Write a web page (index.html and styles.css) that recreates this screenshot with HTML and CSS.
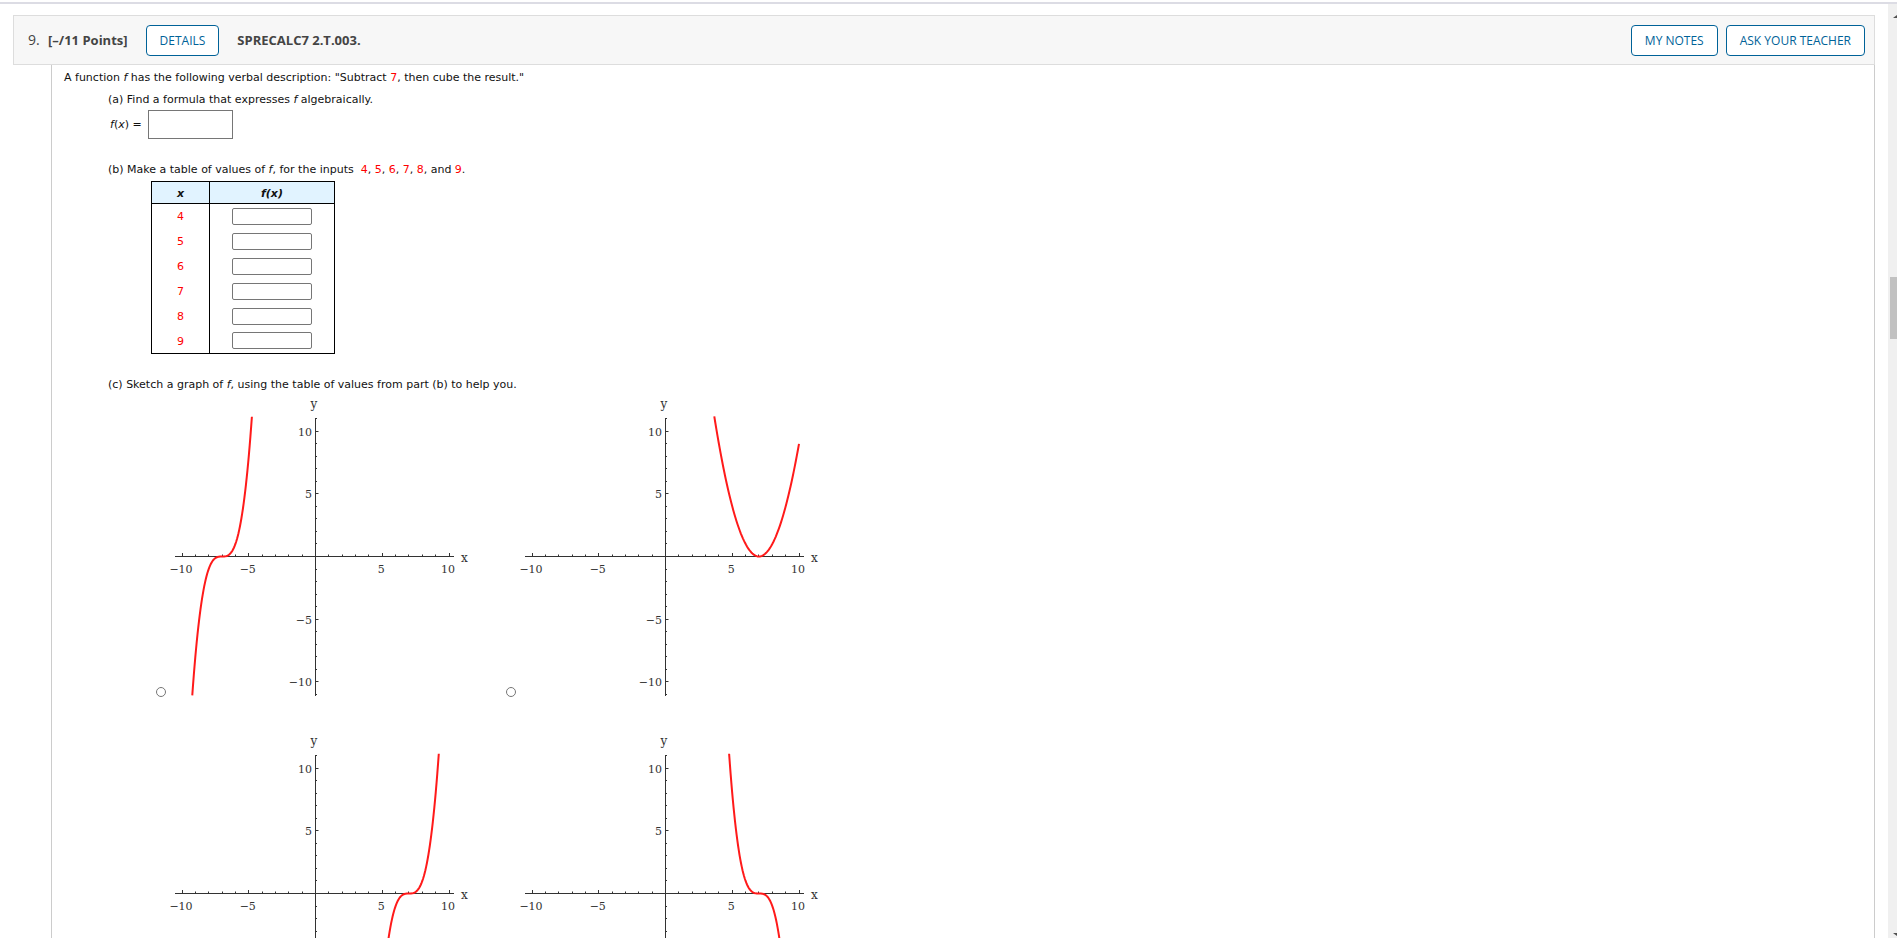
FILE: index.html
```html
<!DOCTYPE html>
<html lang="en">
<head>
  <meta charset="UTF-8">
  <meta name="viewport" content="width=device-width, initial-scale=1.0">
  <title>SPRECALC7 2.T.003.</title>
  <link rel="stylesheet" href="styles.css">
</head>
<body>

  <div class="window">
    <main class="page">
      <section class="question">
        <header class="question-header">
          <span class="number">9.</span>
          <strong class="points">[–/11 Points]</strong>
          <button class="btn" type="button">DETAILS</button>
          <strong class="code">SPRECALC7 2.T.003.</strong>
          <div class="actions">
            <button class="btn" type="button">MY NOTES</button>
            <button class="btn" type="button">ASK YOUR TEACHER</button>
          </div>
        </header>

        <div class="question-body">
          <p>A function <i>f</i> has the following verbal description: "Subtract <span class="red">7</span>, then cube the result."</p>

          <div class="part">
            <p>(a) Find a formula that expresses <i>f</i> algebraically.</p>
            <div class="formula">
              <label for="formula"><i>f</i>(<i>x</i>) =</label>
              <input type="text" id="formula">
            </div>
          </div>

          <div class="part">
            <p>(b) Make a table of values of <i>f</i>, for the inputs &nbsp;<span class="red">4</span>, <span class="red">5</span>, <span class="red">6</span>, <span class="red">7</span>, <span class="red">8</span>, and <span class="red">9</span>.</p>
            <table class="values">
              <thead>
                <tr><th class="col-x">x</th><th class="col-f">f(x)</th></tr>
              </thead>
              <tbody>
                <tr><td class="red">4</td><td><input type="text" aria-label="f(4)"></td></tr>
                <tr><td class="red">5</td><td><input type="text" aria-label="f(5)"></td></tr>
                <tr><td class="red">6</td><td><input type="text" aria-label="f(6)"></td></tr>
                <tr><td class="red">7</td><td><input type="text" aria-label="f(7)"></td></tr>
                <tr><td class="red">8</td><td><input type="text" aria-label="f(8)"></td></tr>
                <tr><td class="red">9</td><td><input type="text" aria-label="f(9)"></td></tr>
              </tbody>
            </table>
          </div>

          <div class="part">
            <p>(c) Sketch a graph of <i>f</i>, using the table of values from part (b) to help you.</p>
            <div class="graphs" id="graphs"></div>
          </div>
        </div>
      </section>
    </main>

    <div class="scrollbar">
      <span class="arrow up"></span>
      <span class="thumb"></span>
      <span class="arrow down"></span>
    </div>
  </div>

  <script>
    // origin and scale of every graph, in svg units
    const OX = 145.5, OY = 161.5, SX = 13.35, SY = 12.52;

    const choices = [
      { fn: x => Math.pow(x + 7, 3), from: -9.23, to: -4.765 },
      { fn: x => Math.pow(x - 7, 2), from: 3.655, to: 10 },
      { fn: x => Math.pow(x - 7, 3), from: 4.77, to: 9.235 },
      { fn: x => -Math.pow(x - 7, 3), from: 4.765, to: 9.23 }
    ];

    function label(x, y, anchor, text, cls) {
      return `<text class="${cls}" x="${x}" y="${y}" text-anchor="${anchor}">${text}</text>`;
    }

    function axes() {
      let d = `M5 ${OY}H284M${OX} 23V301`;
      let out = '';
      for (let i = -11; i <= 11; i++) {
        if (i === 0) continue;
        const major = i % 5 === 0;
        const y = Math.round(OY - i * SY - 0.5) + 0.5;
        d += `M${OX} ${y}h${major ? 3 : 1.5}`;
        if (Math.abs(i) <= 10) {
          const x = Math.round(OX + i * SX - 0.5) + 0.5;
          d += `M${x} ${OY}v${major ? -3.5 : -2}`;
        }
        if (major) {
          const text = String(i).replace('-', '−');
          out += label(OX + i * SX - 1, OY + 16, 'middle', text, 'tick');
          out += label(142, y + 4, 'end', text, 'tick');
        }
      }
      out += label(291, OY + 5, 'start', 'x', 'axis-name');
      out += label(144, 13, 'middle', 'y', 'axis-name');
      return `<path class="axis" d="${d}"/>` + out;
    }

    function curve(c) {
      const points = [];
      for (let i = 0; i <= 80; i++) {
        const x = c.from + (c.to - c.from) * i / 80;
        points.push((OX + x * SX).toFixed(2) + ',' + (OY - c.fn(x) * SY).toFixed(2));
      }
      return `<polyline class="curve" points="${points.join(' ')}"/>`;
    }

    document.getElementById('graphs').innerHTML = choices.map((c, i) => `
      <label class="choice">
        <input type="radio" name="graph" value="${i}" aria-label="Graph ${i + 1}">
        <svg width="304" height="304" viewBox="0 0 304 304">${axes()}${curve(c)}</svg>
      </label>`).join('');
  </script>

</body>
</html>
```
FILE: styles.css
```css
* {
  box-sizing: border-box;
}

body {
  margin: 0;
  overflow: hidden;
  font-family: Verdana, "DejaVu Sans", sans-serif;
  font-size: 11px;
  line-height: 20px;
  color: #111;
  background: #fff;
}

p {
  margin: 0;
  padding-top: 2px;
}

.red {
  color: #f00;
}

.window {
  display: flex;
  height: 100vh;
  padding-top: 4px;
  background: linear-gradient(#fff 2px, #dcdce4 2px, #dcdce4 4px, #fff 4px);
}

.page {
  flex: 1;
  padding: 11px 13px 0;
  overflow: hidden;
}

/* header */

.question-header {
  display: flex;
  align-items: center;
  height: 50px;
  padding: 0 9px 0 14px;
  border: 1px solid #ddd;
  background: #f7f7f7;
  font-family: "Open Sans", sans-serif;
  font-size: 13px;
  color: #444;
}

.number {
  width: 20px;
  font-size: 14px;
}

.points {
  margin-right: 18px;
}

.code {
  margin-left: 18px;
}

.actions {
  display: flex;
  gap: 8px;
  margin-left: auto;
}

.btn {
  height: 31px;
  padding: 0 13px;
  border: 1px solid #006298;
  border-radius: 4px;
  background: #fff;
  font-family: "Open Sans", sans-serif;
  font-size: 12px;
  font-weight: 500;
  color: #006298;
  cursor: pointer;
}

/* question text */

.question-body {
  margin-left: 38px;
  padding: 1px 12px 0;
  border: solid #ccc;
  border-width: 0 1px;
}

.part {
  margin-left: 44px;
}

.formula {
  display: flex;
  align-items: center;
  gap: 6px;
  margin-bottom: 19px;
  padding-left: 2px;
}

.formula input {
  width: 85px;
  height: 29px;
  border: 1px solid #767676;
}

/* table of values */

.values {
  margin: 1px 0 19px 43px;
  border-collapse: collapse;
  border: 1px solid #000;
  line-height: 16px;
  text-align: center;
}

.values th {
  height: 22px;
  padding: 2px 0 0;
  border: 1px solid #000;
  background: #e1f3ff;
  font-style: italic;
}

.values td {
  height: 25px;
  padding: 0;
  border-right: 1px solid #000;
}

.values td.red {
  padding-top: 2px;
}

.col-x {
  width: 58px;
}

.col-f {
  width: 125px;
}

.values input {
  display: block;
  width: 80px;
  height: 17px;
  margin: 0 auto;
  border: 1px solid #767676;
  border-radius: 2px;
}

/* graph choices */

.graphs {
  display: grid;
  grid-template-columns: 350px 350px;
  grid-auto-rows: 337px;
  margin-left: 48px;
}

.choice {
  display: flex;
  align-items: flex-end;
  gap: 4px;
  height: 304px;
}

.choice input {
  width: 10px;
  height: 10px;
  margin: 0 0 2px;
}

.axis {
  fill: none;
  stroke: #333;
}

.curve {
  fill: none;
  stroke: #ff1a1a;
  stroke-width: 2;
}

.tick,
.axis-name {
  font-family: "DejaVu Serif", serif;
  font-size: 11px;
  fill: #333;
}

.axis-name {
  font-size: 12px;
}

/* scrollbar at the window's edge */

.scrollbar {
  display: flex;
  flex-direction: column;
  width: 9px;
  padding: 11px 0 2px 2px;
  overflow: hidden;
  background: #f0f0f0;
}

.thumb {
  height: 62px;
  margin-top: 259px;
  background: #c1c1c1;
}

.arrow {
  width: 8px;
  margin-left: 3px;
  border: 4px solid transparent;
}

.arrow.up {
  height: 3px;
  border-top: 0;
  border-bottom: 3px solid #505050;
}

.arrow.down {
  height: 3px;
  margin-top: auto;
  border-top: 3px solid #505050;
  border-bottom: 0;
}
```
